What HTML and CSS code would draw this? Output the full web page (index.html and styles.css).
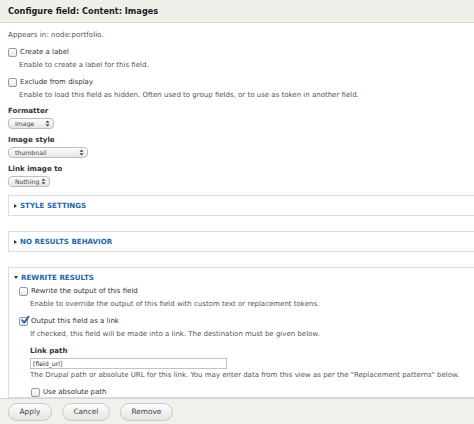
FILE: index.html
```html
<!DOCTYPE html>
<html>
<head>
<meta charset="utf-8">
<link rel="stylesheet" href="styles.css">
</head>
<body>
<div class="dialog">
  <div class="header"><h1 class="title">Configure field: Content: Images</h1></div>
  <div class="content">
    <div class="appears">Appears in: node:portfolio.</div>

    <div class="check-item">
      <label class="check"><span class="box"></span>Create a label</label>
      <div class="desc">Enable to create a label for this field.</div>
    </div>
    <div class="check-item">
      <label class="check"><span class="box"></span>Exclude from display</label>
      <div class="desc">Enable to load this field as hidden. Often used to group fields, or to use as token in another field.</div>
    </div>

    <div class="select-item first">
      <div class="label">Formatter</div>
      <div class="select w-image"><span>Image</span><svg class="arrows" viewBox="0 0 6 8" width="5" height="7"><path d="M3 0.5 L5.5 3.2 L0.5 3.2 Z M3 7.5 L5.5 4.8 L0.5 4.8 Z" fill="#444"/></svg></div>
    </div>
    <div class="select-item">
      <div class="label">Image style</div>
      <div class="select w-thumb"><span>thumbnail</span><svg class="arrows" viewBox="0 0 6 8" width="5" height="7"><path d="M3 0.5 L5.5 3.2 L0.5 3.2 Z M3 7.5 L5.5 4.8 L0.5 4.8 Z" fill="#444"/></svg></div>
    </div>
    <div class="select-item">
      <div class="label">Link image to</div>
      <div class="select w-nothing"><span>Nothing</span><svg class="arrows" viewBox="0 0 6 8" width="5" height="7"><path d="M3 0.5 L5.5 3.2 L0.5 3.2 Z M3 7.5 L5.5 4.8 L0.5 4.8 Z" fill="#444"/></svg></div>
    </div>

    <div class="fieldset collapsed first"><div class="legend"><span class="tri right"></span>STYLE SETTINGS</div></div>
    <div class="fieldset collapsed"><div class="legend"><span class="tri right"></span>NO RESULTS BEHAVIOR</div></div>
    <div class="fieldset open">
      <div class="legend"><span class="tri down"></span>REWRITE RESULTS</div>
      <div class="fs-body">
        <div class="check-item">
          <label class="check"><span class="box"></span>Rewrite the output of this field</label>
          <div class="desc">Enable to override the output of this field with custom text or replacement tokens.</div>
        </div>
        <div class="check-item">
          <label class="check"><span class="box checked"><svg viewBox="0 0 10 10" width="10" height="10"><path d="M2 5.2 L4.2 7.6 L8.6 1.6" fill="none" stroke="#2a5ea8" stroke-width="1.8" stroke-linecap="round" stroke-linejoin="round"/></svg></span>Output this field as a link</label>
          <div class="desc">If checked, this field will be made into a link. The destination must be given below.</div>
        </div>
        <div class="sub">
          <div class="label">Link path</div>
          <div class="input">[field_url]</div>
          <div class="desc nomargin">The Drupal path or absolute URL for this link. You may enter data from this view as per the "Replacement patterns" below.</div>
          <label class="check abs"><span class="box"></span>Use absolute path</label>
        </div>
      </div>
    </div>
  </div>
  <div class="footer">
    <button class="btn">Apply</button>
    <button class="btn">Cancel</button>
    <button class="btn">Remove</button>
  </div>
</div>
</body>
</html>
```

FILE: styles.css
```css
html, body {
  margin: 0;
  padding: 0;
  background: #ffffff;
}
body {
  font-family: "DejaVu Sans", "Liberation Sans", sans-serif;
  color: #333333;
  width: 474px;
  height: 424px;
  overflow: hidden;
}
.dialog {
  position: relative;
  width: 474px;
  height: 424px;
  overflow: hidden;
}
.header {
  height: 23px;
  background: #f0f0eb;
  border-bottom: 1px solid #dcdcd6;
  box-sizing: border-box;
  display: flex;
  align-items: center;
  padding-left: 8px;
}
.title {
  margin: 0;
  font-family: "Liberation Sans Narrow", "DejaVu Sans Condensed", "DejaVu Sans", sans-serif;
  font-stretch: condensed;
  font-size: 9.1px;
  font-weight: bold;
  color: #1a1a1a;
}
.content {
  padding: 0 0 0 8px;
}
.appears {
  font-size: 7.2px;
  color: #555;
  margin-top: 7px;
  line-height: 10px;
  height: 10px;
}
.check-item {
  margin-top: 7px;
}
.check {
  display: flex;
  align-items: center;
  font-size: 7px;
  color: #333;
  line-height: 10px;
  height: 10px;
}
.box {
  width: 7px;
  height: 7px;
  border: 1px solid #9a9a9a;
  border-radius: 2px;
  background: linear-gradient(#ffffff, #e8e8e8);
  margin-right: 3px;
  position: relative;
  flex: none;
}
.box.checked svg {
  position: absolute;
  left: 0;
  top: -3px;
}
.desc {
  font-size: 7px;
  color: #555;
  margin-left: 11px;
  margin-top: 3px;
  line-height: 10px;
  height: 10px;
  white-space: nowrap;
}
.select-item {
  margin-top: 6px;
}
.select-item.first { margin-top: 6px; }
.label {
  font-size: 7.1px;
  font-weight: bold;
  color: #333;
  line-height: 10px;
  height: 10px;
}
.select {
  margin-top: 2px;
  height: 11px;
  box-sizing: border-box;
  border: 1px solid #bdbdbd;
  border-radius: 4px;
  background: linear-gradient(#fdfdfd, #e6e6e6);
  font-size: 6.2px;
  color: #444;
  display: flex;
  align-items: center;
  justify-content: space-between;
  padding: 0 3px 0 6px;
}
.arrows {
  flex: none;
}
.w-image { width: 46px; }
.w-thumb { width: 80px; }
.w-nothing { width: 42px; }
.fieldset {
  border: 1px solid #dddddd;
  border-right: none;
  margin-right: -10px;
}
.collapsed {
  height: 21px;
  box-sizing: border-box;
  margin-top: 15px;
}
.collapsed.first { margin-top: 8px; }
.open { margin-top: 15px; }
.legend {
  font-size: 7.1px;
  font-weight: bold;
  color: #2566a8;
  display: flex;
  align-items: center;
  height: 19px;
  padding-left: 5px;
}
.open .legend {
  height: 18px;
  padding-top: 1px;
  box-sizing: border-box;
}
.tri {
  width: 0;
  height: 0;
  margin-right: 3px;
  display: inline-block;
}
.tri.right {
  border-top: 2.5px solid transparent;
  border-bottom: 2.5px solid transparent;
  border-left: 3px solid #333;
}
.tri.down {
  border-left: 2.5px solid transparent;
  border-right: 2.5px solid transparent;
  border-top: 3px solid #333;
}
.fs-body {
  padding-left: 10px;
}
.fs-body .check-item:first-child { margin-top: 0; }
.sub {
  padding-left: 11px;
  margin-top: 7px;
}
.input {
  margin-top: 2px;
  width: 197px;
  height: 11px;
  box-sizing: border-box;
  border: 1px solid #c4c4c4;
  font-size: 6.2px;
  color: #333;
  padding-left: 2px;
  line-height: 9px;
}
.nomargin { margin-left: 0; margin-top: 1px; }
.abs { margin-top: 7px; margin-left: 1px; }
.footer {
  position: absolute;
  left: 0;
  right: 0;
  bottom: 0;
  height: 26px;
  background: #f1f1ec;
  border-top: 1px solid #d8d8d2;
  box-sizing: border-box;
  display: flex;
  align-items: center;
  padding-left: 8px;
  gap: 10px;
}
.btn {
  font-family: "DejaVu Sans", "Liberation Sans", sans-serif;
  font-size: 7.4px;
  color: #444;
  height: 18px;
  padding: 0 10.5px;
  border: 1px solid #c8c8c8;
  border-radius: 9px;
  background: linear-gradient(#fdfdfd, #e4e4e4);
  margin: 0;
}
```
